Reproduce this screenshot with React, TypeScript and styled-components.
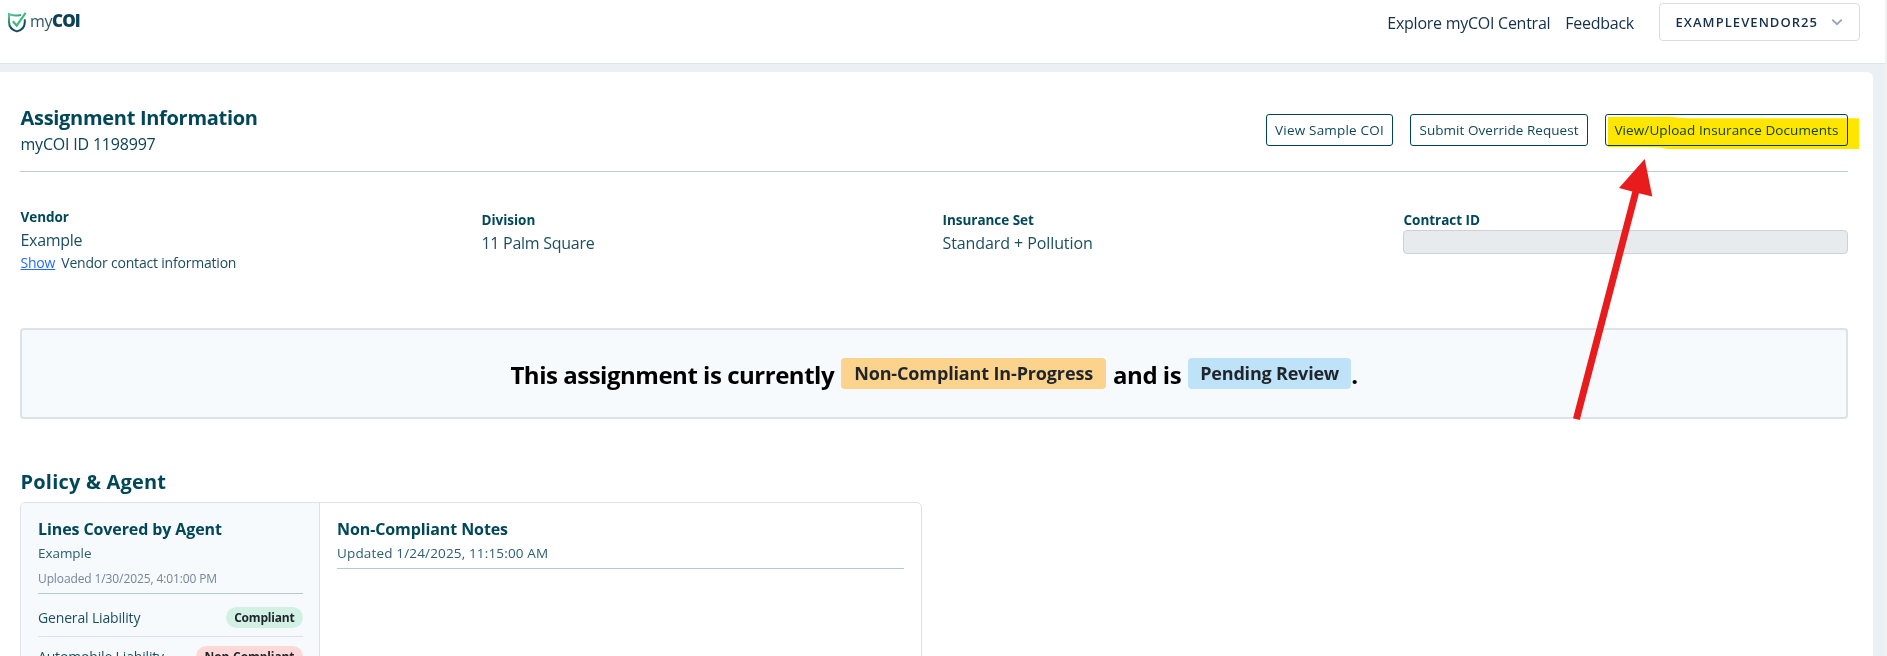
import React from 'react';
import styled, { createGlobalStyle } from 'styled-components';

const GlobalStyle = createGlobalStyle`
  *, *::before, *::after { box-sizing: border-box; }
  body {
    margin: 0;
    overflow: hidden;
    background: #ebf0f4;
    color: #12475a;
    font-family: "Open Sans", "Noto Sans", sans-serif;
  }
`;

const Page = styled.div`
  position: relative;
  height: 656px;
  overflow: hidden;
  border-right: 2px solid #f1f1f2;
`;

const Header = styled.header`
  display: flex;
  justify-content: space-between;
  align-items: flex-start;
  height: 64px;
  padding: 3px 25px 0 8px;
  background: #fff;
  border-bottom: 1px solid #dfe5ef;
`;

const Logo = styled.div`
  display: flex;
  align-items: flex-start;
  padding-top: 9px;
  svg { display: block; margin-right: 3px; }
`;

const LogoText = styled.span<{ $bold?: boolean }>`
  margin-top: -2px;
  font-size: ${(p) => (p.$bold ? '17px' : '16px')};
  line-height: 22px;
  font-weight: ${(p) => (p.$bold ? 800 : 400)};
  letter-spacing: ${(p) => (p.$bold ? '-0.9px' : '-0.4px')};
  color: ${(p) => (p.$bold ? '#0d4157' : '#2c5568')};
`;

const Nav = styled.nav`
  display: flex;
  align-items: flex-start;
`;

const NavLink = styled.a`
  margin: 8px 15px 0 0;
  font-size: 16px;
  line-height: 24px;
  letter-spacing: -0.26px;
  color: #12304a;
`;

const UserMenu = styled.button`
  display: flex;
  align-items: center;
  justify-content: space-between;
  width: 201px;
  height: 38px;
  margin-left: 10px;
  padding: 0 16px 0 15.5px;
  border: 1px solid #dadce3;
  border-radius: 4px;
  background: #fff;
  font: 600 13px/20px "Open Sans", sans-serif;
  letter-spacing: 1.06px;
  color: #14304a;
  svg { display: block; }
`;

const Card = styled.main`
  width: 1873px;
  height: 600px;
  margin-top: 8px;
  padding: 32px 25px 0 20px;
  background: #fff;
  border-radius: 0 6px 0 0;
`;

const TitleBar = styled.section`
  display: flex;
  justify-content: space-between;
  align-items: flex-start;
  height: 68px;
  border-bottom: 1px solid #bccbd1;
`;

const Heading = styled.h1<{ $spacing?: string }>`
  margin: 0;
  padding-left: 0.5px;
  font-size: 20px;
  line-height: 28px;
  font-weight: 700;
  letter-spacing: ${(p) => p.$spacing ?? '-0.3px'};
  color: #00475a;
`;

const SubHeading = styled.div`
  padding-left: 0.5px;
  font-size: 16px;
  line-height: 24px;
  font-weight: 500;
  letter-spacing: -0.2px;
  color: #0c4356;
`;

const Actions = styled.div`
  display: flex;
  gap: 17px;
  padding-top: 10px;
`;

const ActionButton = styled.button<{ $width: number; $spacing: string }>`
  width: ${(p) => p.$width}px;
  height: 32px;
  padding: 0 0 1px;
  border: 1px solid #00435a;
  border-radius: 3px;
  background: #fff;
  font: 400 13.5px/20px "Open Sans", sans-serif;
  letter-spacing: ${(p) => p.$spacing};
  white-space: nowrap;
  color: #12485b;
`;

const Details = styled.section`
  display: grid;
  grid-template-columns: repeat(4, 445px);
  gap: 16px;
  height: 156px;
  padding-top: 35px;
`;

const Field = styled.div<{ $offset?: number }>`
  padding-top: ${(p) => p.$offset ?? 3}px;
`;

const Label = styled.div`
  padding-left: 0.5px;
  font-size: 13.5px;
  line-height: 20px;
  font-weight: 700;
  letter-spacing: -0.03px;
  color: #00475a;
`;

const Value = styled.div<{ $spacing?: string }>`
  padding-left: 0.5px;
  font-size: 16px;
  line-height: 26px;
  letter-spacing: ${(p) => p.$spacing ?? '-0.28px'};
  color: #1b4e60;
`;

const ContactLine = styled.div`
  padding-left: 0.5px;
  font-size: 14px;
  line-height: 20px;
  letter-spacing: -0.2px;
  color: #1b4e60;
`;

const ShowLink = styled.a`
  margin-right: 6px;
  color: #1f6bff;
  text-decoration: underline;
`;

const ReadOnlyInput = styled.div`
  height: 24px;
  border: 1px solid #cdd2d7;
  border-radius: 4px;
  background: #e8ebee;
`;

const Banner = styled.section`
  display: flex;
  align-items: center;
  justify-content: center;
  gap: 7px;
  height: 91px;
  border: 2px solid #dce2e6;
  border-radius: 4px;
  background: #f6fafd;
  font-size: 24px;
  line-height: 40px;
  font-weight: 700;
  letter-spacing: -0.48px;
  color: #000;
`;

const BannerText = styled.span`
  margin-top: 2px;
`;

const Period = styled(BannerText)`
  margin-left: -7px;
`;

const StatusTag = styled.span<{ $tone: string; $width: number; $spacing: string }>`
  width: ${(p) => p.$width}px;
  height: 31px;
  border-radius: 4px;
  background: ${(p) => p.$tone};
  font-size: 18px;
  line-height: 31px;
  text-align: center;
  white-space: nowrap;
  letter-spacing: ${(p) => p.$spacing};
  color: #1f252b;
`;

const PolicySection = styled.section`
  padding-top: 49px;
`;

const PolicyCard = styled.div`
  display: flex;
  width: 902px;
  height: 300px;
  margin-top: 6px;
  border: 1px solid #dfe2e6;
  border-radius: 5px;
  overflow: hidden;
`;

const LinesPanel = styled.div`
  width: 299px;
  padding: 14px 16px 0 17px;
  border-right: 1px solid #dbe0e5;
  background: #f6fafd;
`;

const NotesPanel = styled.div`
  flex: 1;
  padding: 14px 17px 0 17px;
`;

const PanelTitle = styled.h2`
  margin: 0;
  font-size: 16px;
  line-height: 24px;
  font-weight: 700;
  letter-spacing: -0.1px;
  color: #00475a;
`;

const PanelMeta = styled.div<{ $spacing: string }>`
  margin-top: 2px;
  font-size: 13.5px;
  line-height: 20px;
  letter-spacing: ${(p) => p.$spacing};
  color: #2c5f70;
`;

const UploadedAt = styled.div`
  margin-top: 7px;
  font-size: 12px;
  line-height: 18px;
  letter-spacing: -0.11px;
  color: #75859a;
`;

const Rule = styled.div`
  height: 1px;
  margin-top: 5px;
  background: #b3cad2;
`;

const LineRow = styled.div<{ $top: number }>`
  display: flex;
  justify-content: space-between;
  align-items: flex-start;
  padding: ${(p) => p.$top}px 0 8px;
  border-bottom: 1px solid #dbe1e6;
`;

const LineName = styled.span`
  font-size: 14px;
  line-height: 21px;
  letter-spacing: -0.16px;
  color: #1b4e60;
`;

const Pill = styled.span<{ $tone: string; $spacing: string }>`
  height: 21px;
  padding: 0 8.5px;
  border-radius: 11px;
  background: ${(p) => p.$tone};
  font-size: 12px;
  line-height: 21px;
  font-weight: 700;
  letter-spacing: ${(p) => p.$spacing};
  color: #20262c;
`;

const Highlighter = styled.svg`
  position: absolute;
  left: 1608px;
  top: 116px;
  mix-blend-mode: multiply;
`;

const Arrow = styled.svg`
  position: absolute;
  left: 1570px;
  top: 156px;
`;

export default function App() {
  return (
    <>
      <GlobalStyle />
      <Page>
        <Header>
          <Logo>
            <svg width="19" height="21" viewBox="0 0 19 21" fill="none">
              <defs>
                <linearGradient id="shield" x1="0" y1="0" x2="0.35" y2="1">
                  <stop offset="0.1" stopColor="#4fc38b" />
                  <stop offset="0.75" stopColor="#124a60" />
                </linearGradient>
              </defs>
              <path
                d="M13 2.9C11 3.7 4.5 3.7 1 2.1V10C1 14.8 3.8 18 9 19.4C14.2 18 16.8 14.6 16.8 10V7.2"
                stroke="url(#shield)"
                strokeWidth="2"
              />
              <path d="M4.8 9.2L8.7 13.6L17.6 0.8" stroke="#3dbd80" strokeWidth="2.2" />
            </svg>
            <LogoText>my</LogoText>
            <LogoText $bold>COI</LogoText>
          </Logo>
          <Nav>
            <NavLink>Explore myCOI Central</NavLink>
            <NavLink>Feedback</NavLink>
            <UserMenu>
              EXAMPLEVENDOR25
              <svg width="12" height="8" viewBox="0 0 12 8" fill="none">
                <path d="M1.3 1.6L6 6.2L10.7 1.6" stroke="#97a6ba" strokeWidth="1.9" />
              </svg>
            </UserMenu>
          </Nav>
        </Header>

        <Card>
          <TitleBar>
            <div>
              <Heading>Assignment Information</Heading>
              <SubHeading>myCOI ID 1198997</SubHeading>
            </div>
            <Actions>
              <ActionButton $width={127} $spacing="0.2px">View Sample COI</ActionButton>
              <ActionButton $width={178} $spacing="0.04px">Submit Override Request</ActionButton>
              <ActionButton $width={243} $spacing="0.09px">View/Upload Insurance Documents</ActionButton>
            </Actions>
          </TitleBar>

          <Details>
            <Field $offset={0}>
              <Label>Vendor</Label>
              <Value>Example</Value>
              <ContactLine>
                <ShowLink>Show</ShowLink>Vendor contact information
              </ContactLine>
            </Field>
            <Field>
              <Label>Division</Label>
              <Value>11 Palm Square</Value>
            </Field>
            <Field>
              <Label>Insurance Set</Label>
              <Value $spacing="-0.09px">Standard + Pollution</Value>
            </Field>
            <Field>
              <Label>Contract ID</Label>
              <ReadOnlyInput />
            </Field>
          </Details>

          <Banner>
            <BannerText>This assignment is currently</BannerText>
            <StatusTag $tone="#fcd38d" $width={265} $spacing="-0.14px">Non-Compliant In-Progress</StatusTag>
            <BannerText>and is</BannerText>
            <StatusTag $tone="#bee3f8" $width={163} $spacing="-0.2px">Pending Review</StatusTag>
            <Period>.</Period>
          </Banner>

          <PolicySection>
            <Heading as="h2" $spacing="0.2px">Policy &amp; Agent</Heading>
            <PolicyCard>
              <LinesPanel>
                <PanelTitle>Lines Covered by Agent</PanelTitle>
                <PanelMeta $spacing="-0.05px">Example</PanelMeta>
                <UploadedAt>Uploaded 1/30/2025, 4:01:00 PM</UploadedAt>
                <Rule />
                <LineRow $top={13}>
                  <LineName>General Liability</LineName>
                  <Pill $tone="#d2f1e4" $spacing="-0.2px">Compliant</Pill>
                </LineRow>
                <LineRow $top={9}>
                  <LineName>Automobile Liability</LineName>
                  <Pill $tone="#fed7d7" $spacing="-0.08px">Non-Compliant</Pill>
                </LineRow>
              </LinesPanel>
              <NotesPanel>
                <PanelTitle>Non-Compliant Notes</PanelTitle>
                <PanelMeta $spacing="0.16px">Updated 1/24/2025, 11:15:00 AM</PanelMeta>
                <Rule />
              </NotesPanel>
            </PolicyCard>
          </PolicySection>
        </Card>

        <Highlighter width="251" height="34" viewBox="0 0 251 34">
          <path d="M0 0.8H60C68 1 71 2 78 2.2H251V33H64C56 33 54 31.2 46 31.2H0Z" fill="#ffe600" />
        </Highlighter>
        <Arrow width="90" height="266" viewBox="0 0 90 266">
          <path
            d="M74.7 3L82.3 40.6L69 37.2L9.8 264L3 262.3L62.3 35.4L49 32Z"
            fill="#e81c1c"
          />
        </Arrow>
      </Page>
    </>
  );
}
